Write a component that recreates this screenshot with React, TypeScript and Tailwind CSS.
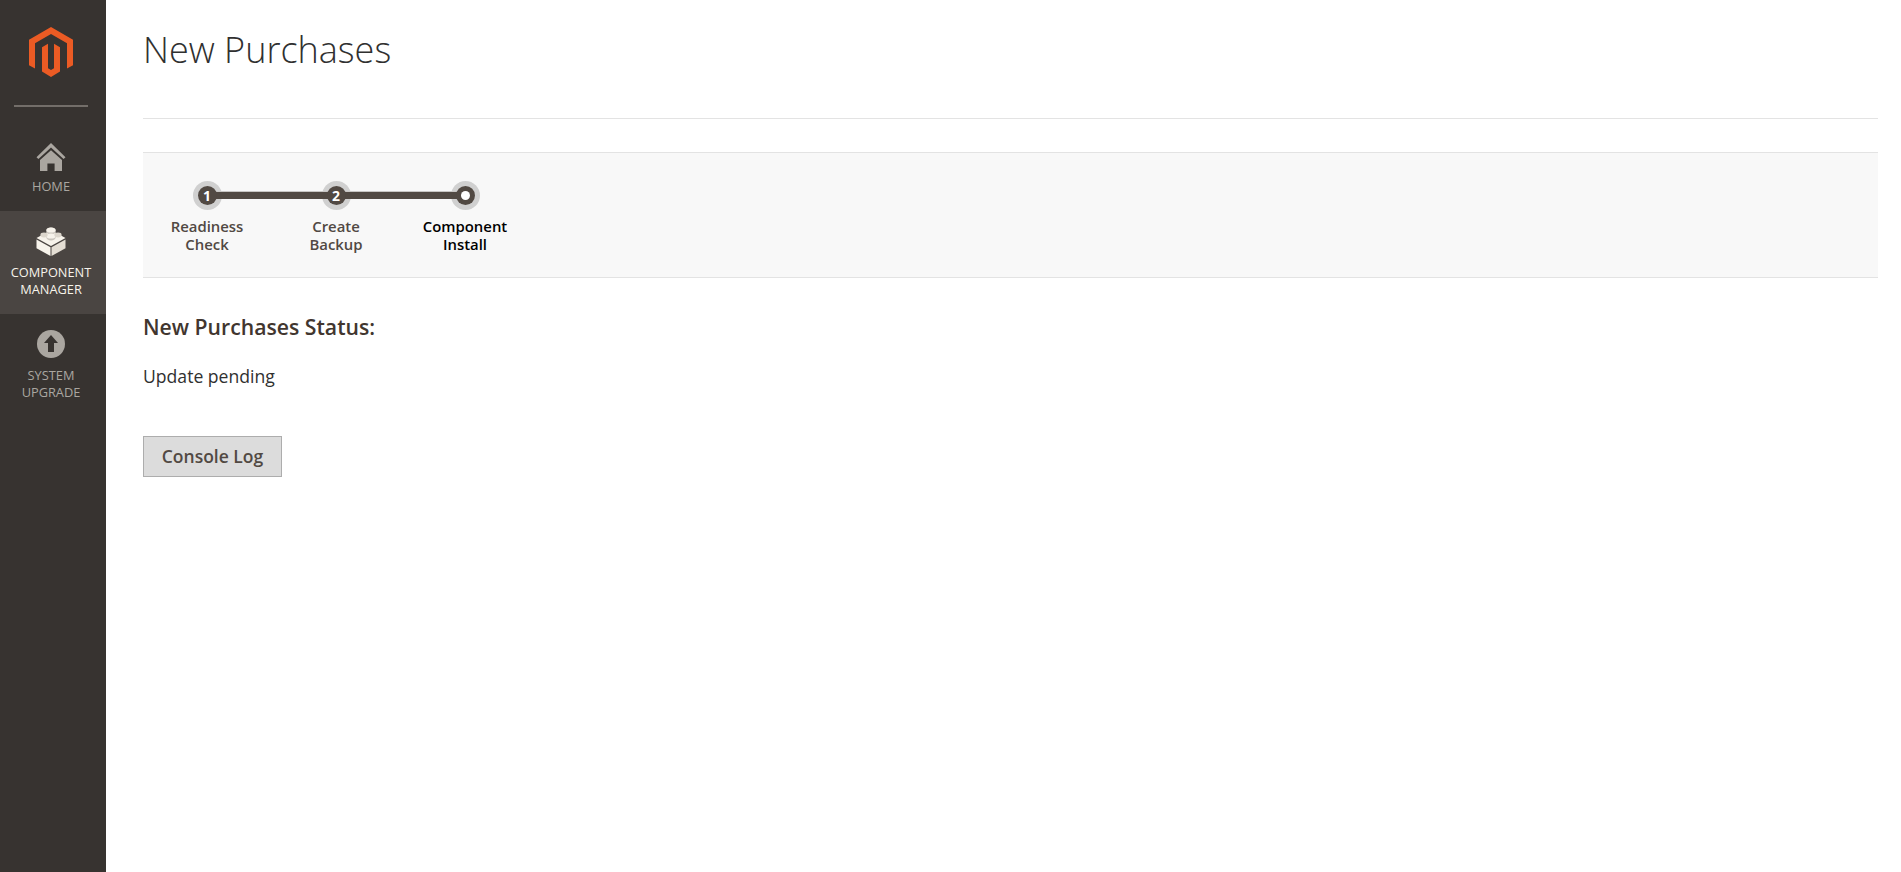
const font = "font-['Open_Sans',sans-serif]";

function Logo() {
  return (
    <svg width="44" height="50" viewBox="0 0 44 50">
      <path
        fill="#eb5b24"
        d="M22 0 44 12.7V38.2L38 41.6V16.2L22 6.9 6 16.2V41.6L0 38.2V12.7Z"
      />
      <path
        fill="#eb5b24"
        d="M13 20.2 19 16.8V41.3L22 43.1 25 41.3V16.8L31 20.2V44.4L22 50 13 44.4Z"
      />
    </svg>
  );
}

function HomeIcon() {
  return (
    <svg width="30" height="28" viewBox="0 0 30 28">
      <path fill="#aaa6a0" d="M15 0 29.5 14.2 27.6 16 15 4.6 2.4 16 .5 14.2Z" />
      <path fill="#aaa6a0" d="M15 7.2 26 17V28H18.6V20.5H11.4V28H4V17Z" />
    </svg>
  );
}

function BlockIcon() {
  return (
    <svg width="30" height="29" viewBox="0 0 30 29">
      <path fill="#f7f3eb" d="M15 3 29.5 11 15 19 .5 11Z" />
      <path fill="#f7f3eb" d="M.5 12.5 14.5 20.3V29L.5 21.2Z" />
      <path fill="#e4ded4" d="M29.5 12.5 15.5 20.3V29L29.5 21.2Z" />
      <ellipse cx="15" cy="4" rx="4.8" ry="3.4" fill="#c9c4bc" />
      <ellipse cx="15" cy="3" rx="4.6" ry="2.6" fill="#f7f3eb" />
      <ellipse cx="15" cy="10" rx="4.8" ry="3.4" fill="#c9c4bc" />
      <ellipse cx="15" cy="9" rx="4.6" ry="2.6" fill="#f7f3eb" />
      <ellipse cx="8" cy="8" rx="3.6" ry="2.4" fill="#dcd6cc" />
      <ellipse cx="22" cy="8" rx="3.6" ry="2.4" fill="#dcd6cc" />
    </svg>
  );
}

function UpgradeIcon() {
  return (
    <svg width="28" height="28" viewBox="0 0 28 28">
      <circle cx="14" cy="14" r="14" fill="#aaa6a0" />
      <path fill="#373330" d="M14 5 21 13H17V22H11V13H7Z" />
    </svg>
  );
}

function NavItem({ icon, lines, active, compact }: { icon: React.ReactNode; lines: string[]; active?: boolean; compact?: boolean }) {
  return (
    <div
      className={`flex flex-col items-center pt-[16px] pr-[4px] ${compact ? 'h-[84px]' : 'h-[103px]'} ${
        active ? 'bg-[#4a4542] text-[#f7f3eb]' : 'text-[#aaa6a0]'
      }`}
    >
      <div className="h-[28px] flex items-center justify-center">{icon}</div>
      <div className={`${compact ? 'mt-[7px]' : 'mt-[9px]'} text-[12.8px] leading-[17px] text-center uppercase`}>
        {lines.map((l) => (
          <div key={l}>{l}</div>
        ))}
      </div>
    </div>
  );
}

const steps = [
  { mark: '1', lines: ['Readiness', 'Check'] },
  { mark: '2', lines: ['Create', 'Backup'] },
  { mark: '', lines: ['Component', 'Install'], current: true },
];

function Step({ mark, lines, current, last }: { mark: string; lines: string[]; current?: boolean; last?: boolean }) {
  return (
    <div className="relative w-[129px] flex flex-col items-center">
      {!last && (
        <div className="absolute left-[64px] top-[10px] w-[129px] h-[8px] bg-[#514943] border-t border-[#c8c6c4] z-[5]" />
      )}
      <div className="w-[29px] h-[29px] rounded-full bg-[#d0d0d0] flex items-center justify-center">
        <div className="relative z-10 w-[19px] h-[19px] rounded-full bg-[#514943] flex items-center justify-center text-white text-[14px] leading-none font-bold">
          {current ? <div className="w-[9px] h-[9px] rounded-full bg-white" /> : mark}
        </div>
      </div>
      <div
        className={`mt-[8px] text-[14.9px] leading-[17.5px] font-semibold text-center whitespace-nowrap ${
          current ? 'text-[#000000]' : 'text-[#514943]'
        }`}
      >
        {lines.map((l) => (
          <div key={l}>{l}</div>
        ))}
      </div>
    </div>
  );
}

export default function App() {
  return (
    <div className={`${font} flex min-h-[872px] bg-white`}>
      {/* Sidebar */}
      <aside className="w-[106px] shrink-0 bg-[#373330]">
        <div className="flex justify-center pt-[27px] pr-[4px]">
          <Logo />
        </div>
        <div className="ml-[14px] mr-[18px] mt-[28px] h-[2px] bg-[#736e69]" />
        <div className="pt-[20px]">
          <NavItem icon={<HomeIcon />} lines={['Home']} compact />
          <NavItem icon={<BlockIcon />} lines={['Component', 'Manager']} active />
          <NavItem icon={<UpgradeIcon />} lines={['System', 'Upgrade']} />
        </div>
      </aside>

      {/* Content */}
      <main className="flex-1 pl-[37px] pr-[23px]">
        <h1 className="pt-[27px] h-[119px] border-b border-[#e3e3e3] text-[36px] leading-[46px] font-light text-[#303030]">
          New Purchases
        </h1>

        <div className="mt-[33px] h-[126px] bg-[#f8f8f8] border-y border-[#e3e3e3] pt-[28px]">
          <div className="flex -ml-[0.5px]">
            {steps.map((s, i) => (
              <Step key={s.lines[0]} {...s} last={i === steps.length - 1} />
            ))}
          </div>
        </div>

        <h2 className="mt-[35px] text-[21.2px] leading-[28px] font-semibold text-[#41362f]">New Purchases Status:</h2>
        <p className="mt-[23px] text-[17.6px] leading-[24px] text-[#303030]">Update pending</p>
        <button className="mt-[48px] block w-[139px] h-[41px] bg-[#dcdcdc] border border-[#adadad] text-[17.5px] font-semibold text-[#514943]">
          Console Log
        </button>
      </main>
    </div>
  );
}
